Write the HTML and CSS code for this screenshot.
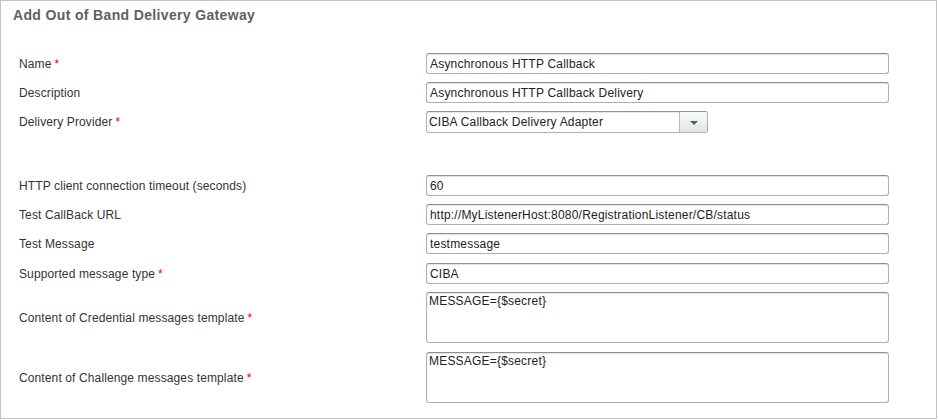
FILE: index.html
```html
<!DOCTYPE html>
<html>
<head>
<meta charset="utf-8">
<link rel="stylesheet" href="styles.css">
</head>
<body>
<div class="panel">
  <h1 class="title">Add Out of Band Delivery Gateway</h1>
  <form class="form">
    <div class="row">
      <label class="label">Name<span class="req">*</span></label>
      <input class="field" type="text" value="Asynchronous HTTP Callback">
    </div>
    <div class="row">
      <label class="label">Description</label>
      <input class="field" type="text" value="Asynchronous HTTP Callback Delivery">
    </div>
    <div class="row">
      <label class="label">Delivery Provider<span class="req">*</span></label>
      <div class="select">
        <span class="select-text">CIBA Callback Delivery Adapter</span>
        <span class="select-btn"><span class="caret"></span></span>
      </div>
    </div>
    <div class="spacer"></div>
    <div class="row">
      <label class="label">HTTP client connection timeout (seconds)</label>
      <input class="field" type="text" value="60">
    </div>
    <div class="row">
      <label class="label">Test CallBack URL</label>
      <input class="field" type="text" value="http://MyListenerHost:8080/RegistrationListener/CB/status">
    </div>
    <div class="row row-wide">
      <label class="label">Test Message</label>
      <input class="field" type="text" value="testmessage">
    </div>
    <div class="row">
      <label class="label">Supported message type<span class="req">*</span></label>
      <input class="field" type="text" value="CIBA">
    </div>
    <div class="row row-wide">
      <label class="label">Content of Credential messages template<span class="req">*</span></label>
      <textarea class="field area">MESSAGE={$secret}</textarea>
    </div>
    <div class="row">
      <label class="label">Content of Challenge messages template<span class="req">*</span></label>
      <textarea class="field area">MESSAGE={$secret}</textarea>
    </div>
  </form>
</div>
</body>
</html>
```

FILE: styles.css
```css
html, body {
  margin: 0;
  padding: 0;
  background: #fff;
}
body {
  font-family: "Liberation Sans", Arial, sans-serif;
  font-size: 12px;
  color: #333;
}
.panel {
  box-sizing: border-box;
  width: 937px;
  height: 419px;
  border: 1px solid #c4c4c4;
  overflow: hidden;
}
.title {
  margin: 0;
  padding: 6px 0 0 12px;
  height: 18px;
  font-size: 14px;
  font-weight: bold;
  letter-spacing: 0.35px;
  color: #5f5f5f;
  line-height: 16px;
}
.form {
  margin: 0;
  padding: 28px 0 0 18px;
}
.row {
  display: flex;
  align-items: center;
  margin-bottom: 8px;
}
.row-wide {
  margin-bottom: 9px;
}
.label {
  width: 407px;
  flex: none;
  color: #333;
  line-height: 14px;
  letter-spacing: 0.12px;
}
.req {
  color: #e00;
  margin-left: 3px;
}
.field {
  box-sizing: border-box;
  width: 463px;
  height: 21px;
  margin: 0;
  padding: 1px 3px 0;
  font-family: "Liberation Sans", Arial, sans-serif;
  font-size: 12px;
  letter-spacing: 0.2px;
  color: #222;
  background: #fff;
  border: 1px solid #b0b0b0;
  border-top-color: #8f8f8f;
  border-radius: 3px;
  box-shadow: inset 0 1px 1px rgba(0,0,0,0.12);
  outline: none;
}
.area {
  height: 51px;
  resize: none;
  padding: 1px 2px;
  line-height: 14px;
  overflow: hidden;
}
.select {
  box-sizing: border-box;
  width: 282px;
  height: 22px;
  display: flex;
  border: 1px solid #b0b0b0;
  border-top-color: #8f8f8f;
  border-radius: 3px;
  background: #fff;
  box-shadow: inset 0 1px 1px rgba(0,0,0,0.1);
}
.select-text {
  flex: 1;
  padding: 0 2px;
  line-height: 20px;
  letter-spacing: 0.2px;
  color: #222;
}
.select-btn {
  width: 27px;
  flex: none;
  border-left: 1px solid #b8b8b8;
  border-radius: 0 2px 2px 0;
  background: linear-gradient(#fbfbfb, #e4e4e4);
  display: flex;
  align-items: center;
  justify-content: center;
}
.caret {
  width: 0;
  height: 0;
  border-left: 4px solid transparent;
  border-right: 4px solid transparent;
  border-top: 4px solid #3f6379;
  margin-top: 1px;
}
.spacer {
  height: 34px;
}
```
